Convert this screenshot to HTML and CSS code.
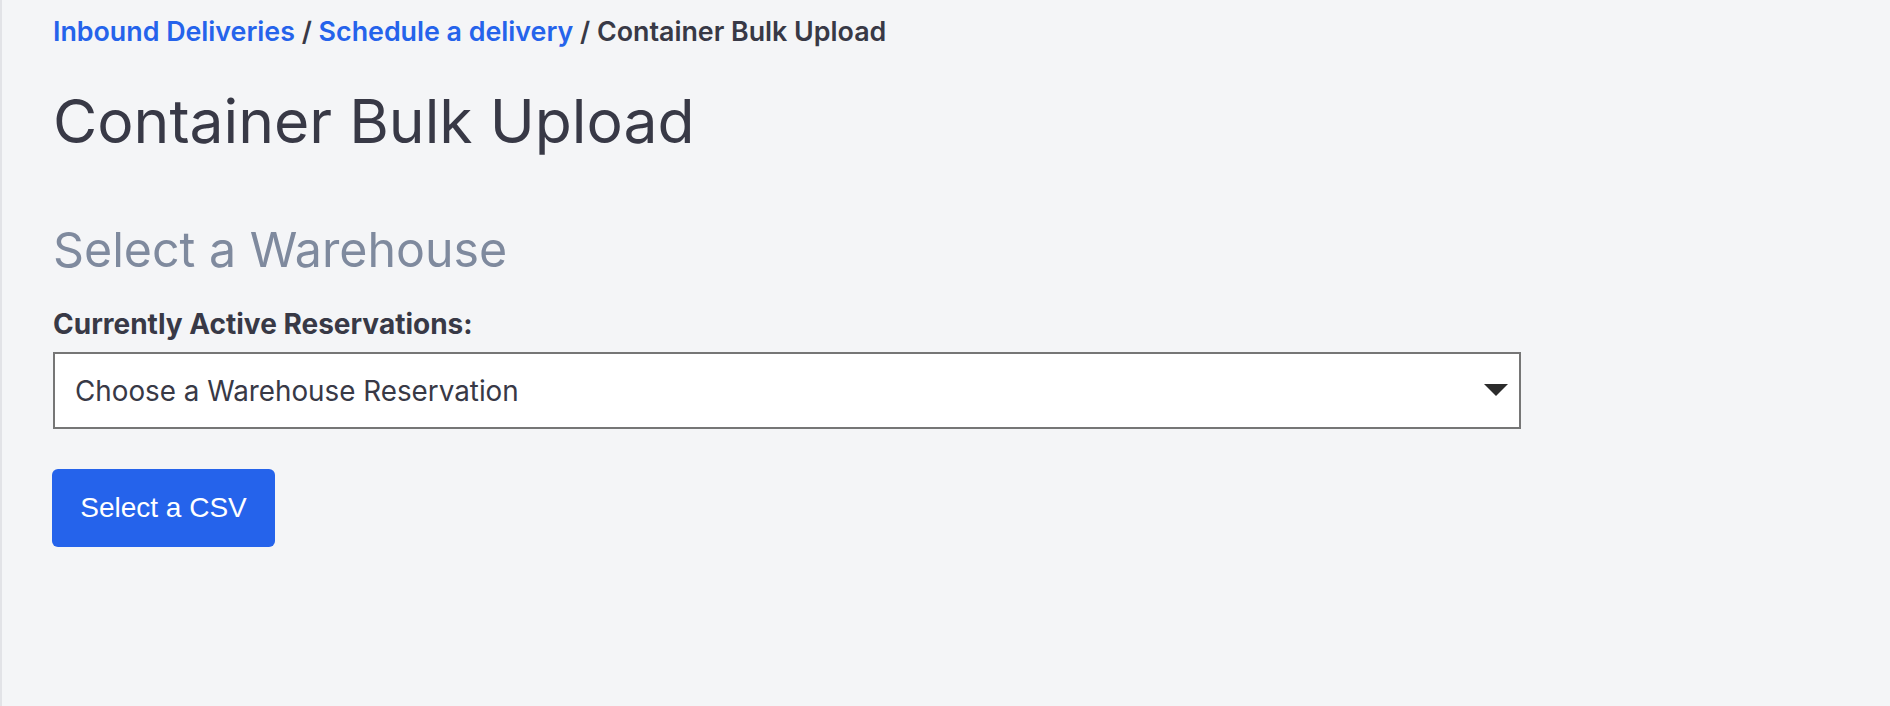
FILE: index.html
```html
<!DOCTYPE html>
<html lang="en">
<head>
<meta charset="utf-8">
<title>Container Bulk Upload</title>
<link rel="stylesheet" href="styles.css">
</head>
<body>
<main class="page">
  <nav class="breadcrumb">
    <a href="#" class="crumb-link">Inbound Deliveries</a>
    <span class="sep">/</span>
    <a href="#" class="crumb-link">Schedule a delivery</a>
    <span class="sep">/</span>
    <span class="crumb-current">Container Bulk Upload</span>
  </nav>
  <h1 class="title">Container Bulk Upload</h1>
  <h2 class="subtitle">Select a Warehouse</h2>
  <label class="field-label">Currently Active Reservations:</label>
  <div class="select">
    <span class="select-text">Choose a Warehouse Reservation</span>
    <svg class="select-arrow" width="24" height="12" viewBox="0 0 24 12"><path d="M0 0 H24 L12 12 Z" fill="#2b2b2b"/></svg>
  </div>
  <button class="btn" type="button">Select a CSV</button>
</main>
</body>
</html>
```

FILE: styles.css
```css
html, body {
  margin: 0;
  padding: 0;
  background: #f4f5f7;
}
body {
  font-family: Inter, "Noto Sans", sans-serif;
  color: #383946;
  min-height: 706px;
}
.page {
  box-sizing: border-box;
  min-height: 706px;
  border-left: 2px solid #e2e3e7;
  padding: 11px 0 0 51px;
  display: flex;
  flex-direction: column;
  align-items: flex-start;
}
.breadcrumb {
  font-size: 26.8px;
  line-height: 40px;
  font-weight: 600;
  white-space: nowrap;
}
.crumb-link {
  color: #2563eb;
  text-decoration: none;
}
.sep, .crumb-current {
  color: #383946;
}
.title {
  margin: 34px 0 0 0;
  font-size: 60.6px;
  line-height: 72px;
  font-weight: 400;
  color: #383946;
}
.subtitle {
  margin: 63px 0 0 0;
  font-size: 48.3px;
  line-height: 60px;
  font-weight: 400;
  color: #7f8a9e;
}
.field-label {
  margin-top: 24px;
  font-size: 28px;
  line-height: 40px;
  font-weight: 700;
  color: #383946;
}
.select {
  margin-top: 8px;
  box-sizing: border-box;
  width: 1468px;
  height: 77px;
  background: #fff;
  border: 2px solid #767676;
  display: flex;
  align-items: center;
  justify-content: space-between;
  padding: 0 11px 0 20px;
}
.select-text {
  font-size: 27.8px;
  line-height: 40px;
  color: #383946;
}
.select-arrow {
  display: block;
  margin-top: -2px;
}
.btn {
  margin: 40px 0 0 -1px;
  width: 223px;
  height: 78px;
  border: none;
  border-radius: 6px;
  background: #2563eb;
  color: #fff;
  font-family: "Liberation Sans", Arial, sans-serif;
  font-size: 28px;
  padding: 0;
  cursor: pointer;
}
```
